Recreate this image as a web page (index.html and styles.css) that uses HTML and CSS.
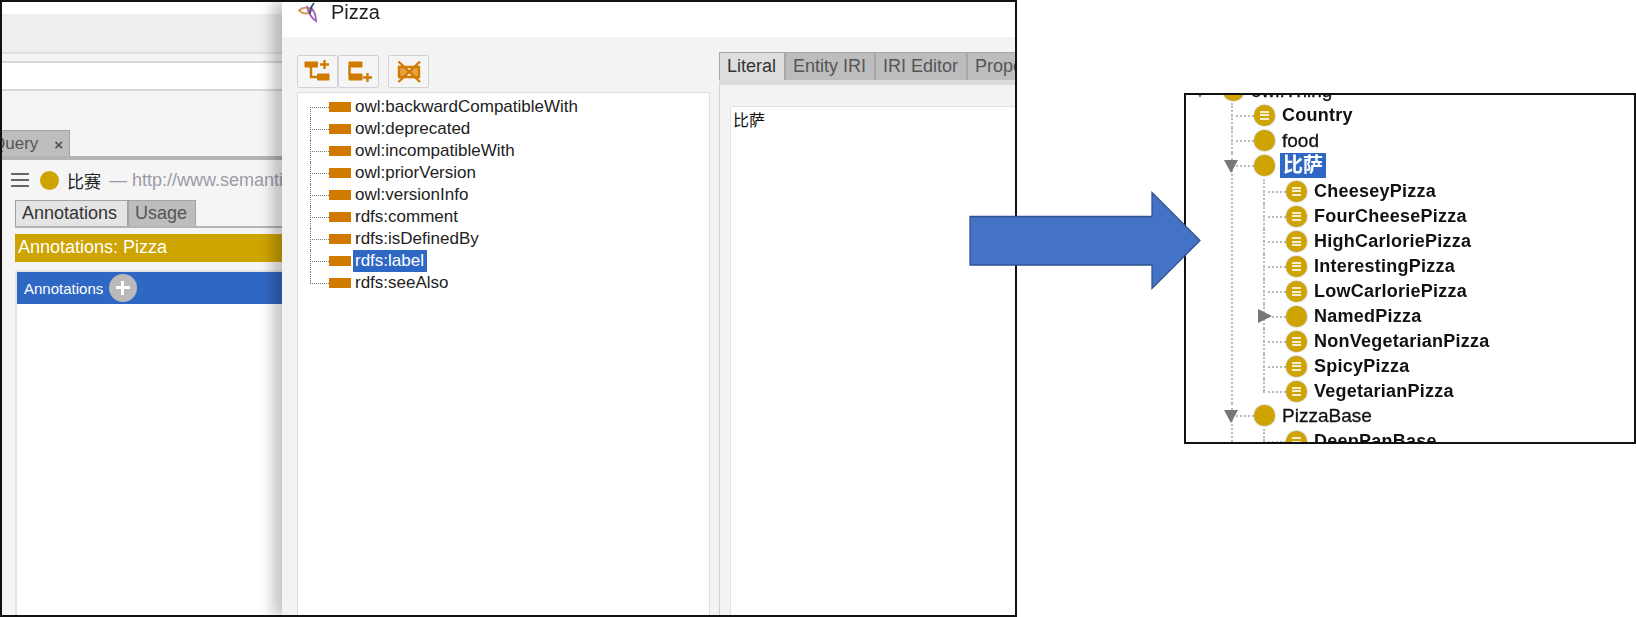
FILE: index.html
```html
<!DOCTYPE html>
<html lang="zh">
<head>
  <meta charset="UTF-8" />
  <title>Pizza</title>
  <link rel="stylesheet" href="styles.css">
</head>
<body>
  <div class="window">
    <div class="app">
      <div class="app-top"></div>
      <div class="app-band"></div>
      <div class="app-input"></div>
      <div class="view-tabs">
        <div class="view-tab"><span>Query</span><span class="close">×</span></div>
      </div>
      <div class="entity-head">
        <span class="burger"><i></i><i></i><i></i></span>
        <span class="dot"></span>
        <span class="entity-name">比赛</span>
        <span class="entity-iri">— http://www.semantic</span>
      </div>
      <div class="sub-tabs">
        <div class="sub-tab active">Annotations</div>
        <div class="sub-tab">Usage</div>
      </div>
      <div class="gold-bar">Annotations: Pizza</div>
      <div class="annot-panel">
        <div class="annot-bar">Annotations <span class="plus"></span></div>
      </div>
    </div>

    <div class="dialog">
      <div class="dialog-head">
        <svg class="logo" width="22" height="22" viewBox="0 0 22 22" fill="none" stroke-width="1.800">
          <path d="M1 8.500C5 4.500 10 5 14 8.500C11 12 6 13 1 8.500Z" stroke="#d9964f"/>
          <path d="M9 4C10 10 12 15 18 19C18 13 16 8 12 5" stroke="#9a62b8"/>
          <path d="M16 1C13 5 11.500 8 12 12" stroke="#3c4c88"/>
        </svg>
        <span class="dialog-title">Pizza</span>
      </div>
      <div class="dialog-body">
        <div class="left-col">
          <div class="toolbar">
            <button class="tool">
              <svg width="30" height="24" viewBox="0 0 30 24">
                <rect class="ic" x="1.500" y="1.500" width="13.500" height="6" rx="1"/>
                <rect class="ic" x="14" y="13.500" width="12.500" height="7" rx="1"/>
                <path class="ic-line" d="M8 7v10h6M17 4.500h9M21.500 0v9"/>
              </svg>
            </button>
            <button class="tool">
              <svg width="30" height="24" viewBox="0 0 30 24">
                <rect class="ic" x="4.500" y="1.500" width="14" height="6" rx="1"/>
                <rect class="ic" x="4.500" y="13.500" width="14" height="7" rx="1"/>
                <path class="ic-line" d="M5.500 6v9M19 17.500h9M23.500 13v9"/>
              </svg>
            </button>
            <button class="tool tool-sep">
              <svg width="30" height="26" viewBox="0 0 30 26">
                <path class="ic-soft" d="M5 8h5l6 5-6 5H5zM25 8h-5l-6 5 6 5h5z"/>
                <path class="ic-line" d="M5 8h20v10H5zM4.500 2.500L26 23M26 2.500L4.500 23"/>
              </svg>
            </button>
          </div>
          <div class="prop-panel">
            <ul class="prop-tree">
              <li><span class="dash"></span><span class="swatch"></span><span class="prop">owl:backwardCompatibleWith</span></li>
              <li><span class="dash"></span><span class="swatch"></span><span class="prop">owl:deprecated</span></li>
              <li><span class="dash"></span><span class="swatch"></span><span class="prop">owl:incompatibleWith</span></li>
              <li><span class="dash"></span><span class="swatch"></span><span class="prop">owl:priorVersion</span></li>
              <li><span class="dash"></span><span class="swatch"></span><span class="prop">owl:versionInfo</span></li>
              <li><span class="dash"></span><span class="swatch"></span><span class="prop">rdfs:comment</span></li>
              <li><span class="dash"></span><span class="swatch"></span><span class="prop">rdfs:isDefinedBy</span></li>
              <li><span class="dash"></span><span class="swatch"></span><span class="prop selected">rdfs:label</span></li>
              <li><span class="dash"></span><span class="swatch"></span><span class="prop">rdfs:seeAlso</span></li>
            </ul>
          </div>
        </div>
        <div class="right-col">
          <div class="edit-tabs">
            <div class="edit-tab active">Literal</div>
            <div class="edit-tab">Entity IRI</div>
            <div class="edit-tab">IRI Editor</div>
            <div class="edit-tab">Properties</div>
          </div>
          <div class="edit-rule"></div>
          <div class="edit-pane">
            <div class="literal-box">比萨</div>
          </div>
        </div>
      </div>
    </div>
  </div>

  <div class="class-box">
    <ul class="class-tree root">
      <li><div class="row"><span class="tri down"></span><span class="dash"></span><span class="ball"></span><span class="name plain">owl:Thing</span></div>
        <ul class="class-tree">
          <li><div class="row"><span class="dash"></span><span class="ball lined"></span><span class="name">Country</span></div></li>
          <li><div class="row"><span class="dash"></span><span class="ball"></span><span class="name plain">food</span></div></li>
          <li>
            <div class="row"><span class="tri down"></span><span class="dash"></span><span class="ball"></span><span class="name cjk selected">比萨</span></div>
            <ul class="class-tree">
              <li><div class="row"><span class="dash"></span><span class="ball lined"></span><span class="name">CheeseyPizza</span></div></li>
              <li><div class="row"><span class="dash"></span><span class="ball lined"></span><span class="name">FourCheesePizza</span></div></li>
              <li><div class="row"><span class="dash"></span><span class="ball lined"></span><span class="name">HighCarloriePizza</span></div></li>
              <li><div class="row"><span class="dash"></span><span class="ball lined"></span><span class="name">InterestingPizza</span></div></li>
              <li><div class="row"><span class="dash"></span><span class="ball lined"></span><span class="name">LowCarloriePizza</span></div></li>
              <li><div class="row"><span class="tri side"></span><span class="dash"></span><span class="ball"></span><span class="name">NamedPizza</span></div></li>
              <li><div class="row"><span class="dash"></span><span class="ball lined"></span><span class="name">NonVegetarianPizza</span></div></li>
              <li><div class="row"><span class="dash"></span><span class="ball lined"></span><span class="name">SpicyPizza</span></div></li>
              <li><div class="row"><span class="dash"></span><span class="ball lined"></span><span class="name">VegetarianPizza</span></div></li>
            </ul>
          </li>
          <li>
            <div class="row"><span class="tri down"></span><span class="dash"></span><span class="ball"></span><span class="name plain">PizzaBase</span></div>
            <ul class="class-tree">
              <li><div class="row"><span class="dash"></span><span class="ball lined"></span><span class="name">DeepPanBase</span></div></li>
            </ul>
          </li>
        </ul>
      </li>
    </ul>
  </div>

  <svg class="arrow" width="234" height="100" viewBox="0 0 234 100">
    <path d="M1 25.500H183V1.500L231 49.500 183 97.500V74H1Z" fill="#4472c4" stroke="#2f528f" stroke-width="1.300"/>
  </svg>
</body>
</html>
```

FILE: styles.css
```css
* {
  box-sizing: border-box;
}

body {
  margin: 0;
  height: 617px;
  overflow: hidden;
  background: #fff;
  font-family: "Liberation Sans", "Noto Sans CJK SC", sans-serif;
  color: #222;
}

ul {
  list-style: none;
  margin: 0;
  padding: 0;
}

/* left screenshot */
.window {
  position: absolute;
  left: 0;
  top: 0;
  width: 1017px;
  height: 617px;
  border: 2px solid #111;
  display: flex;
  overflow: hidden;
  filter: blur(0.35px);
}

.app {
  width: 280px;
  flex: none;
  background: #f5f5f5;
  display: flex;
  flex-direction: column;
}

.app-top {
  height: 12px;
  background: #fff;
}

.app-band {
  height: 40px;
  background: #eeeeee;
  border-bottom: 2px solid #e0e0e0;
}

.app-input {
  height: 30px;
  margin-top: 7px;
  background: #fff;
  border-top: 2px solid #d8d8d8;
  border-bottom: 2px solid #d8d8d8;
}

.view-tabs {
  margin-top: 39px;
  height: 30px;
  border-bottom: 4px solid #b4b4b4;
  display: flex;
}

.view-tab {
  width: 92px;
  flex: none;
  margin-left: -24px;
  background: #bdbdbd;
  border: 1px solid #a2a2a2;
  border-bottom: none;
  font-size: 17px;
  color: #555;
  display: flex;
  align-items: center;
  justify-content: space-between;
  padding: 1px 6px 0 13px;
}

.view-tab .close {
  font-size: 15px;
  font-weight: bold;
  color: #555;
}

.entity-head {
  height: 40px;
  padding-left: 9px;
  display: flex;
  align-items: center;
  font-size: 18px;
  white-space: nowrap;
  overflow: hidden;
}

.burger {
  width: 18px;
  flex: none;
  display: flex;
  flex-direction: column;
  gap: 4px;
  margin-right: 11px;
}

.burger i {
  display: block;
  height: 2px;
  background: #666;
}

.dot {
  width: 19px;
  height: 19px;
  border-radius: 50%;
  background: #d0a400;
  margin-right: 8px;
  flex: none;
}

.entity-name {
  font-size: 17px;
  color: #222;
  margin-right: 8px;
}

.entity-iri {
  color: #9b9ba8;
}

.sub-tabs {
  margin: 0 0 0 13px;
  height: 28px;
  border-bottom: 2px solid #b4b4b4;
  display: flex;
}

.sub-tab {
  padding: 0 8px 0 6px;
  background: #bdbdbd;
  border: 1px solid #a2a2a2;
  border-bottom: none;
  font-size: 18px;
  line-height: 25px;
  color: #555;
}

.sub-tab.active {
  padding-right: 10px;
  background: #e4e4e4;
  color: #333;
}

.gold-bar {
  margin: 6px 0 0 13px;
  height: 28px;
  padding-left: 3px;
  background: #cda400;
  color: #fff;
  font-size: 18px;
  line-height: 27px;
  white-space: nowrap;
}

.annot-panel {
  flex: 1;
  margin: 8px 0 0 13px;
  background: #fff;
  border-left: 2px solid #e6e6e6;
  border-top: 2px solid #e6e6e6;
}

.annot-bar {
  height: 32px;
  background: #2f68c4;
  color: #fff;
  font-size: 15px;
  padding-left: 7px;
  display: flex;
  align-items: center;
  gap: 6px;
}

.plus {
  position: relative;
  width: 28px;
  height: 28px;
  border-radius: 50%;
  background: #b9b9b9;
}

.plus::before,
.plus::after {
  content: "";
  position: absolute;
  background: #fff;
}

.plus::before {
  left: 7px;
  right: 7px;
  top: 12px;
  height: 3px;
}

.plus::after {
  top: 7px;
  bottom: 7px;
  left: 12px;
  width: 3px;
}

/* dialog */
.dialog {
  position: relative;
  flex: 1;
  min-width: 0;
  background: #f3f3f3;
  box-shadow: -10px 0 12px rgba(0, 0, 0, 0.22);
  display: flex;
  flex-direction: column;
}

.dialog-head {
  height: 35px;
  background: #fff;
  display: flex;
  align-items: flex-start;
  padding-left: 16px;
  overflow: hidden;
}

.logo {
  margin-right: 11px;
  flex: none;
}

.dialog-title {
  font-size: 20px;
  line-height: 21px;
  color: #222;
}

.dialog-body {
  flex: 1;
  min-height: 0;
  display: flex;
  padding-left: 15px;
  overflow: hidden;
}

.left-col {
  width: 413px;
  flex: none;
  display: flex;
  flex-direction: column;
  padding-top: 18px;
}

.toolbar {
  display: flex;
  height: 33px;
}

.tool {
  width: 41px;
  height: 33px;
  padding: 0;
  background: #f5f5f5;
  border: 1px solid #d2d2d2;
  border-radius: 2px;
  display: flex;
  align-items: center;
  justify-content: center;
}

.tool-sep {
  margin-left: 9px;
}

.ic {
  fill: #d07a00;
}

.ic-soft {
  fill: #e8a040;
}

.ic-line {
  fill: none;
  stroke: #d07a00;
  stroke-width: 2.400;
}

.prop-panel {
  flex: 1;
  margin-top: 4px;
  background: #fff;
  border: 1px solid #dedede;
  border-bottom: none;
  padding: 3px 0 0 12px;
}

.prop-tree li {
  position: relative;
  height: 22px;
  display: flex;
  align-items: center;
  white-space: nowrap;
}

.prop-tree li::before {
  content: "";
  position: absolute;
  left: 0;
  top: 0;
  bottom: 0;
  border-left: 1px dotted #777;
}

.prop-tree li:first-child::before {
  top: 50%;
}

.prop-tree li:last-child::before {
  bottom: 50%;
}

.prop-tree .dash {
  width: 19px;
  border-top: 1px dotted #777;
}

.swatch {
  width: 22px;
  height: 10px;
  background: #d07a00;
  margin-right: 2px;
}

.prop {
  font-size: 17px;
  line-height: 22px;
  padding: 0 2px;
  color: #222;
}

.prop.selected {
  background: #2f68c4;
  color: #fff;
  padding-right: 3px;
}

.right-col {
  flex: 1;
  min-width: 0;
  margin-left: 9px;
  padding-top: 15px;
  display: flex;
  flex-direction: column;
  overflow: hidden;
}

.edit-tabs {
  display: flex;
  height: 28px;
  white-space: nowrap;
}

.edit-tab {
  flex: none;
  background: #bdbdbd;
  border: 1px solid #a8a8a8;
  border-bottom: none;
  padding: 0 8px 0 7px;
  font-size: 18px;
  line-height: 26px;
  color: #555;
}

.edit-tab.active {
  background: #dedede;
  color: #333;
}

.edit-rule {
  height: 5px;
  background: #dcdcdc;
}

.edit-pane {
  flex: 1;
  border-left: 1px solid #d0d0d0;
  padding: 21px 0 0 10px;
}

.literal-box {
  height: 100%;
  background: #fff;
  border-left: 1px solid #e2e2e2;
  border-top: 1px solid #e2e2e2;
  padding: 3px 0 0 2px;
  font-size: 16px;
  line-height: 22px;
  color: #111;
}

.arrow {
  position: absolute;
  left: 969px;
  top: 191px;
}

/* right screenshot */
.class-box {
  position: absolute;
  left: 1184px;
  top: 93px;
  width: 452px;
  height: 351px;
  border: 2px solid #111;
  background: #fff;
  overflow: hidden;
  filter: blur(0.35px);
}

.root {
  margin-top: -17px;
  margin-left: 14px;
}

.class-tree .class-tree {
  margin-left: 31px;
}

.class-tree .class-tree .class-tree {
  margin: 1px 0 -1px 32px;
}

.class-tree li {
  position: relative;
}

.class-tree li::before {
  content: "";
  position: absolute;
  left: 0;
  top: 0;
  bottom: 0;
  border-left: 2px dotted #bbb;
}

.root > li::before {
  display: none;
}

.class-tree li:last-child:not(:has(ul))::before {
  bottom: auto;
  height: 12px;
}

.row {
  position: relative;
  height: 25px;
  display: flex;
  align-items: center;
  white-space: nowrap;
}

.row .dash {
  width: 23px;
  border-top: 2px dotted #bbb;
  flex: none;
}

.ball {
  position: relative;
  width: 21px;
  height: 21px;
  border-radius: 50%;
  background: #cfa400;
  box-shadow: 0 0 2px #999;
  margin-right: 7px;
  flex: none;
}

.ball.lined::after {
  content: "";
  position: absolute;
  left: 6px;
  right: 6px;
  top: 6px;
  height: 9px;
  background: repeating-linear-gradient(#f6efcf 0 2px, #cfa400 2px 3.500px);
}

.name {
  font-size: 18px;
  letter-spacing: 0.25px;
  font-weight: bold;
  color: #111;
}

.name.plain {
  font-size: 19px;
  letter-spacing: 0;
  font-weight: normal;
  -webkit-text-stroke: 0.3px #111;
}

.name.cjk {
  font-size: 20px;
  letter-spacing: 0;
  line-height: 25px;
  padding: 0 3px;
}

.name.selected {
  background: #2f68c4;
  color: #fff;
  margin-left: -2px;
}

.tri {
  position: absolute;
  width: 0;
  height: 0;
}

.tri.down {
  left: -7px;
  top: 7px;
  border-left: 7px solid transparent;
  border-right: 7px solid transparent;
  border-top: 13px solid #777;
}

.tri.side {
  left: -5px;
  top: 5px;
  border-top: 7px solid transparent;
  border-bottom: 7px solid transparent;
  border-left: 14px solid #777;
}
```
